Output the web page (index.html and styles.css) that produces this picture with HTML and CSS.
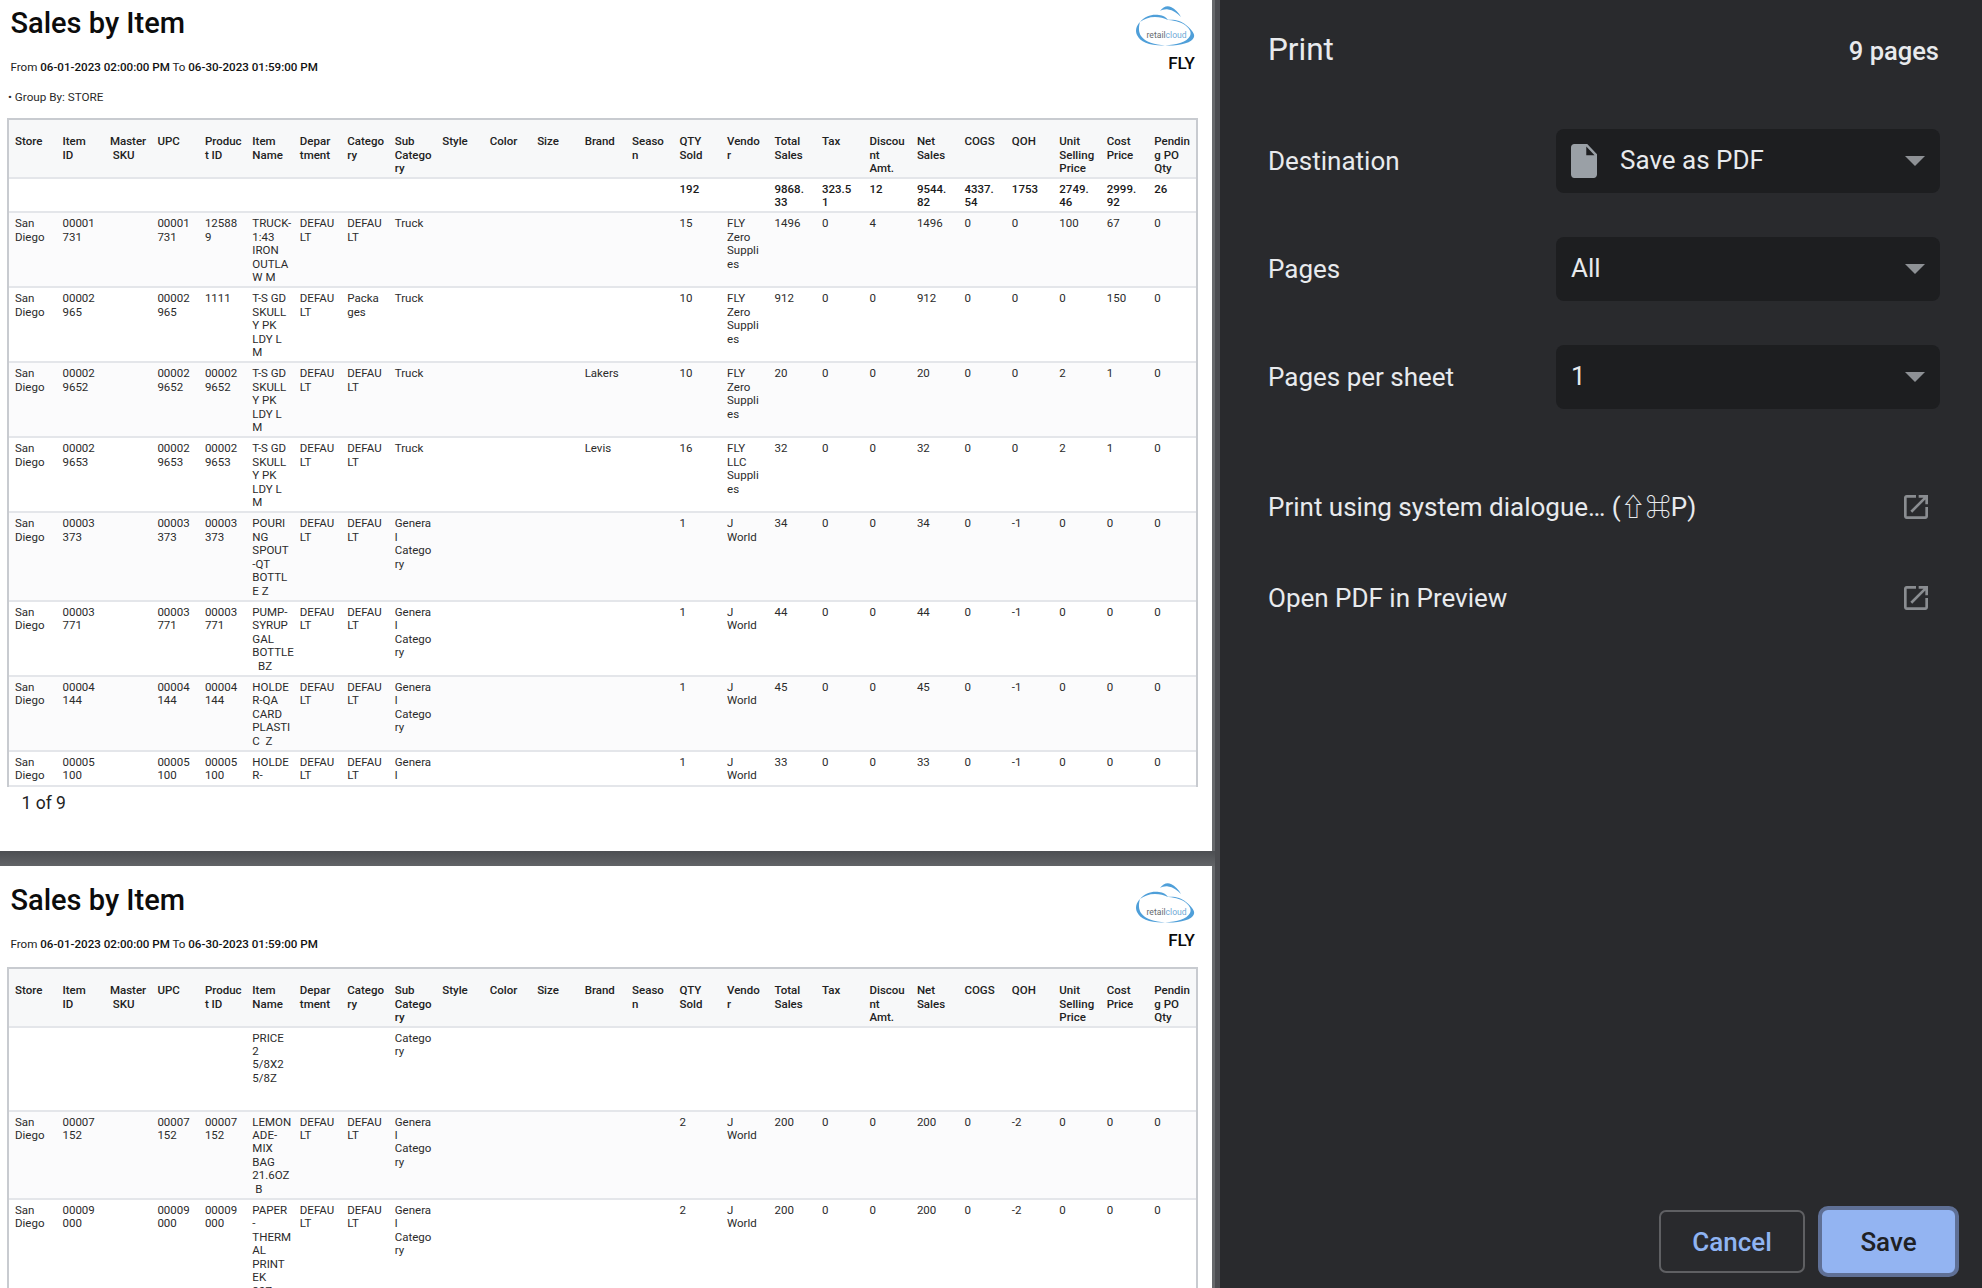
FILE: index.html
```html
<!DOCTYPE html>
<html lang="en">
<head>
<meta charset="utf-8">
<title>Print - Sales by Item</title>
<link rel="stylesheet" href="styles.css">
</head>
<body>
<div class="app">
<main class="preview">
  <section class="page page-first">
    <header class="report-head">
      <div class="report-titles">
        <h1 class="title">Sales by Item</h1>
        <p class="range">From <b>06-01-2023 02:00:00 PM</b> To <b>06-30-2023 01:59:00 PM</b></p>
      </div>
      <div class="brand">
        <svg class="logo" width="60" height="40" viewBox="0 0 60 40">
          <path class="logo-arc" d="M25 5C28 1 32 -1 36 1C40 3 44 7 46 11C42 7 38 4 33 3.500C30 3 27 4 25 5Z"/>
          <path class="logo-arc" d="M5 16C10 10 17 8 24 9C28 9.500 31 11 33 14C29 12 25 11 20 11C14 11 9 13 5 16Z"/>
          <path class="logo-arc" d="M5 16C1 20 0 25 2 29C5 36 15 40 30 39.500C20 38.500 10 36 6 30C3.500 26 3.500 21 5 16Z"/>
          <path class="logo-arc" d="M31 14C38 13 46 14 51 19C57 24 60 28 59 31C57 37 45 40 30 39.500C42 38.500 52 36 55 30C57 26 54 22 50 19C45 15.500 38 14 31 14Z"/>
        </svg>
        <span class="logo-text">retail<i>cloud</i></span>
        <span class="fly">FLY</span>
      </div>
    </header>
    <p class="group">• Group By: STORE</p>
    <table class="report">
      <thead>
        <tr><th>Store</th><th>Item<br>ID</th><th>Master<br>&nbsp;SKU</th><th>UPC</th><th>Produc<br>t ID</th><th>Item<br>Name</th><th>Depar<br>tment</th><th>Catego<br>ry</th><th>Sub<br>Catego<br>ry</th><th>Style</th><th>Color</th><th>Size</th><th>Brand</th><th>Seaso<br>n</th><th>QTY<br>Sold</th><th>Vendo<br>r</th><th>Total<br>Sales</th><th>Tax</th><th>Discou<br>nt<br>Amt.</th><th>Net<br>Sales</th><th>COGS</th><th>QOH</th><th>Unit<br>Selling<br>Price</th><th>Cost<br>Price</th><th>Pendin<br>g PO<br>Qty</th></tr>
      </thead>
      <tbody>
        <tr class="total"><td colspan="14"></td><td>192</td><td></td><td>9868.<br>33</td><td>323.5<br>1</td><td>12</td><td>9544.<br>82</td><td>4337.<br>54</td><td>1753</td><td>2749.<br>46</td><td>2999.<br>92</td><td>26</td></tr>
        <tr class="shade"><td>San<br>Diego</td><td>00001<br>731</td><td></td><td>00001<br>731</td><td>12588<br>9</td><td>TRUCK-<br>1:43<br>IRON<br>OUTLA<br>W M</td><td>DEFAU<br>LT</td><td>DEFAU<br>LT</td><td>Truck</td><td colspan="3"></td><td></td><td></td><td>15</td><td>FLY<br>Zero<br>Suppli<br>es</td><td>1496</td><td>0</td><td>4</td><td>1496</td><td>0</td><td>0</td><td>100</td><td>67</td><td>0</td></tr>
        <tr><td>San<br>Diego</td><td>00002<br>965</td><td></td><td>00002<br>965</td><td>1111</td><td>T-S GD<br>SKULL<br>Y PK<br>LDY L<br>M</td><td>DEFAU<br>LT</td><td>Packa<br>ges</td><td>Truck</td><td colspan="3"></td><td></td><td></td><td>10</td><td>FLY<br>Zero<br>Suppli<br>es</td><td>912</td><td>0</td><td>0</td><td>912</td><td>0</td><td>0</td><td>0</td><td>150</td><td>0</td></tr>
        <tr class="shade"><td>San<br>Diego</td><td>00002<br>9652</td><td></td><td>00002<br>9652</td><td>00002<br>9652</td><td>T-S GD<br>SKULL<br>Y PK<br>LDY L<br>M</td><td>DEFAU<br>LT</td><td>DEFAU<br>LT</td><td>Truck</td><td colspan="3"></td><td>Lakers</td><td></td><td>10</td><td>FLY<br>Zero<br>Suppli<br>es</td><td>20</td><td>0</td><td>0</td><td>20</td><td>0</td><td>0</td><td>2</td><td>1</td><td>0</td></tr>
        <tr><td>San<br>Diego</td><td>00002<br>9653</td><td></td><td>00002<br>9653</td><td>00002<br>9653</td><td>T-S GD<br>SKULL<br>Y PK<br>LDY L<br>M</td><td>DEFAU<br>LT</td><td>DEFAU<br>LT</td><td>Truck</td><td colspan="3"></td><td>Levis</td><td></td><td>16</td><td>FLY<br>LLC<br>Suppli<br>es</td><td>32</td><td>0</td><td>0</td><td>32</td><td>0</td><td>0</td><td>2</td><td>1</td><td>0</td></tr>
        <tr class="shade"><td>San<br>Diego</td><td>00003<br>373</td><td></td><td>00003<br>373</td><td>00003<br>373</td><td>POURI<br>NG<br>SPOUT<br>-QT<br>BOTTL<br>E Z</td><td>DEFAU<br>LT</td><td>DEFAU<br>LT</td><td>Genera<br>l<br>Catego<br>ry</td><td colspan="3"></td><td></td><td></td><td>1</td><td>J<br>World</td><td>34</td><td>0</td><td>0</td><td>34</td><td>0</td><td>-1</td><td>0</td><td>0</td><td>0</td></tr>
        <tr><td>San<br>Diego</td><td>00003<br>771</td><td></td><td>00003<br>771</td><td>00003<br>771</td><td>PUMP-<br>SYRUP<br>GAL<br>BOTTLE<br>&nbsp;&nbsp;BZ</td><td>DEFAU<br>LT</td><td>DEFAU<br>LT</td><td>Genera<br>l<br>Catego<br>ry</td><td colspan="3"></td><td></td><td></td><td>1</td><td>J<br>World</td><td>44</td><td>0</td><td>0</td><td>44</td><td>0</td><td>-1</td><td>0</td><td>0</td><td>0</td></tr>
        <tr class="shade"><td>San<br>Diego</td><td>00004<br>144</td><td></td><td>00004<br>144</td><td>00004<br>144</td><td>HOLDE<br>R-QA<br>CARD<br>PLASTI<br>C&nbsp;&nbsp;Z</td><td>DEFAU<br>LT</td><td>DEFAU<br>LT</td><td>Genera<br>l<br>Catego<br>ry</td><td colspan="3"></td><td></td><td></td><td>1</td><td>J<br>World</td><td>45</td><td>0</td><td>0</td><td>45</td><td>0</td><td>-1</td><td>0</td><td>0</td><td>0</td></tr>
        <tr><td>San<br>Diego</td><td>00005<br>100</td><td></td><td>00005<br>100</td><td>00005<br>100</td><td>HOLDE<br>R-</td><td>DEFAU<br>LT</td><td>DEFAU<br>LT</td><td>Genera<br>l</td><td colspan="3"></td><td></td><td></td><td>1</td><td>J<br>World</td><td>33</td><td>0</td><td>0</td><td>33</td><td>0</td><td>-1</td><td>0</td><td>0</td><td>0</td></tr>
      </tbody>
    </table>
    <p class="page-count">1 of 9</p>
  </section>

  <section class="page page-next">
    <header class="report-head">
      <div class="report-titles">
        <h1 class="title">Sales by Item</h1>
        <p class="range">From <b>06-01-2023 02:00:00 PM</b> To <b>06-30-2023 01:59:00 PM</b></p>
      </div>
      <div class="brand">
        <svg class="logo" width="60" height="40" viewBox="0 0 60 40">
          <path class="logo-arc" d="M25 5C28 1 32 -1 36 1C40 3 44 7 46 11C42 7 38 4 33 3.500C30 3 27 4 25 5Z"/>
          <path class="logo-arc" d="M5 16C10 10 17 8 24 9C28 9.500 31 11 33 14C29 12 25 11 20 11C14 11 9 13 5 16Z"/>
          <path class="logo-arc" d="M5 16C1 20 0 25 2 29C5 36 15 40 30 39.500C20 38.500 10 36 6 30C3.500 26 3.500 21 5 16Z"/>
          <path class="logo-arc" d="M31 14C38 13 46 14 51 19C57 24 60 28 59 31C57 37 45 40 30 39.500C42 38.500 52 36 55 30C57 26 54 22 50 19C45 15.500 38 14 31 14Z"/>
        </svg>
        <span class="logo-text">retail<i>cloud</i></span>
        <span class="fly">FLY</span>
      </div>
    </header>
    <table class="report">
      <thead>
        <tr><th>Store</th><th>Item<br>ID</th><th>Master<br>&nbsp;SKU</th><th>UPC</th><th>Produc<br>t ID</th><th>Item<br>Name</th><th>Depar<br>tment</th><th>Catego<br>ry</th><th>Sub<br>Catego<br>ry</th><th>Style</th><th>Color</th><th>Size</th><th>Brand</th><th>Seaso<br>n</th><th>QTY<br>Sold</th><th>Vendo<br>r</th><th>Total<br>Sales</th><th>Tax</th><th>Discou<br>nt<br>Amt.</th><th>Net<br>Sales</th><th>COGS</th><th>QOH</th><th>Unit<br>Selling<br>Price</th><th>Cost<br>Price</th><th>Pendin<br>g PO<br>Qty</th></tr>
      </thead>
      <tbody>
        <tr class="carry"><td colspan="5"></td><td>PRICE<br>2<br>5/8X2<br>5/8Z</td><td colspan="2"></td><td>Catego<br>ry</td><td colspan="16"></td></tr>
        <tr class="shade"><td>San<br>Diego</td><td>00007<br>152</td><td></td><td>00007<br>152</td><td>00007<br>152</td><td>LEMON<br>ADE-<br>MIX<br>BAG<br>21.6OZ<br>&nbsp;B</td><td>DEFAU<br>LT</td><td>DEFAU<br>LT</td><td>Genera<br>l<br>Catego<br>ry</td><td colspan="3"></td><td></td><td></td><td>2</td><td>J<br>World</td><td>200</td><td>0</td><td>0</td><td>200</td><td>0</td><td>-2</td><td>0</td><td>0</td><td>0</td></tr>
        <tr><td>San<br>Diego</td><td>00009<br>000</td><td></td><td>00009<br>000</td><td>00009<br>000</td><td>PAPER<br>-<br>THERM<br>AL<br>PRINT<br>EK<br>80Z</td><td>DEFAU<br>LT</td><td>DEFAU<br>LT</td><td>Genera<br>l<br>Catego<br>ry</td><td colspan="3"></td><td></td><td></td><td>2</td><td>J<br>World</td><td>200</td><td>0</td><td>0</td><td>200</td><td>0</td><td>-2</td><td>0</td><td>0</td><td>0</td></tr>
      </tbody>
    </table>
  </section>
</main>

<aside class="panel">
  <header class="panel-head">
    <h2 class="panel-title">Print</h2>
    <span class="sheet-count">9 pages</span>
  </header>
  <div class="settings">
    <label class="setting-label">Destination</label>
    <div class="select">
      <svg class="doc-icon" width="26" height="34" viewBox="4 2 16 20" preserveAspectRatio="none"><path d="M14 2H6c-1.100 0-2 .9-2 2v16c0 1.100.9 2 2 2h12c1.100 0 2-.9 2-2V8l-6-6zm-.6 6.600V3.500l5.100 5.100h-5.100z"/></svg>
      <span class="select-value">Save as PDF</span>
      <span class="caret"></span>
    </div>
    <label class="setting-label">Pages</label>
    <div class="select"><span class="select-value">All</span><span class="caret"></span></div>
    <label class="setting-label">Pages per sheet</label>
    <div class="select"><span class="select-value">1</span><span class="caret"></span></div>
  </div>
  <nav class="links">
    <a class="link"><span>Print using system dialogue… (<span class="keys">⇧⌘</span>P)</span>
      <svg class="ext-icon" width="24" height="24" viewBox="3 3 18 18"><path d="M19 19H5V5h7V3H5c-1.110 0-2 .9-2 2v14c0 1.100.89 2 2 2h14c1.100 0 2-.9 2-2v-7h-2v7zM14 3v2h3.590l-9.830 9.830 1.410 1.410L19 6.410V10h2V3h-7z"/></svg>
    </a>
    <a class="link"><span>Open PDF in Preview</span>
      <svg class="ext-icon" width="24" height="24" viewBox="3 3 18 18"><path d="M19 19H5V5h7V3H5c-1.110 0-2 .9-2 2v14c0 1.100.89 2 2 2h14c1.100 0 2-.9 2-2v-7h-2v7zM14 3v2h3.590l-9.830 9.830 1.410 1.410L19 6.410V10h2V3h-7z"/></svg>
    </a>
  </nav>
  <footer class="actions">
    <button class="btn btn-cancel">Cancel</button>
    <button class="btn btn-save">Save</button>
  </footer>
</aside>
</div>
</body>
</html>
```
FILE: styles.css
```css
* { box-sizing: border-box; }
html, body { margin: 0; height: 100%; overflow: hidden; background: #292a2d; }
body { font-family: Roboto, "Noto Sans", sans-serif; }

.app { display: flex; width: 1982px; height: 1288px; overflow: hidden; }

/* preview column */
.preview {
  width: 1220px;
  flex: none;
  height: 1288px;
  overflow: hidden;
  background: linear-gradient(90deg, #66686b 1215px, #4b4c50 1215px);
}
.page {
  position: relative;
  width: 1212px;
  background: #fff;
  padding: 0 7px;
  color: #1f1f1f;
}
.page-first { height: 851px; margin-bottom: 15px; }
.page-first::after {
  content: "";
  position: absolute;
  top: 100%;
  left: 0;
  width: 1215px;
  height: 15px;
  background: linear-gradient(180deg, #4c4e52, #626467);
}
.page-next { height: 422px; padding-top: 11px; overflow: hidden; }

.report-head { display: flex; justify-content: space-between; align-items: flex-start; padding: 0 10px 0 3.500px; }
.title { margin: 0; padding-top: 6px; font-size: 29px; line-height: 34px; font-weight: 500; color: #0c0c0c; }
.range { margin: 20.500px 0 15.500px; font-size: 11.600px; line-height: 13.400px; color: #222; }
.range b { font-weight: 500; color: #111; }

.brand { position: relative; display: flex; flex-direction: column; align-items: flex-end; padding-top: 5.500px; width: 60px; }
.logo { display: block; flex: none; }
.logo-arc { fill: #4f9fd9; }
.logo-text {
  position: absolute;
  left: 11.500px;
  top: 29px;
  font-size: 8.600px;
  line-height: 12px;
  color: #666a6e;
  white-space: nowrap;
}
.logo-text i { font-style: normal; color: #6fa9d6; }
.fly { margin-top: 7px; font-size: 17px; line-height: 20px; font-weight: 500; color: #0a0a0a; }

.group { margin: 1.500px 0 14px 1px; font-size: 11.700px; line-height: 13.400px; color: #2a2a2a; }

/* report table */
.report {
  table-layout: fixed;
  width: 1191px;
  margin-top: 1px;
  border-collapse: separate;
  border-spacing: 0;
  border-top: 2px solid #c8cbd0;
  border-left: 2px solid #c8cbd0;
  border-right: 2px solid #c8cbd0;
  font-size: 11.500px;
  line-height: 13.400px;
  white-space: nowrap;
}
.report th, .report td {
  padding: 4px 0 2px 6px;
  text-align: left;
  vertical-align: top;
  border-bottom: 2px solid #e4e6ea;
  color: #2b2b2b;
  font-weight: 400;
}
.report th { padding: 15px 0 1px 6px; background: #f7f8f9; font-weight: 500; color: #222; }
.report .total td { font-weight: 500; color: #1a1a1a; background: #fff; }
.report .shade td { background: #fbfbfc; }
.report .carry td { padding-bottom: 24.400px; }

.page-count { margin: 6px 0 0 14.500px; font-size: 17.500px; line-height: 20px; color: #222; }

/* print settings */
.panel {
  width: 762px;
  flex: none;
  height: 1288px;
  display: flex;
  flex-direction: column;
  padding: 25px 43px 11px 48px;
  background: #292a2d;
  color: #e8eaed;
}
.panel-head { display: flex; justify-content: space-between; align-items: center; height: 50px; margin-bottom: 54px; }
.panel-title { margin: 0; font-size: 31.500px; font-weight: 400; line-height: 50px; }
.sheet-count { font-size: 25.500px; font-weight: 500; color: #e8eaed; padding-top: 2px; }

.settings { display: grid; grid-template-columns: 288px 383.500px; grid-auto-rows: 64px; row-gap: 44px; align-items: center; }
.setting-label { font-size: 26px; }
.select {
  position: relative;
  display: flex;
  align-items: center;
  height: 64px;
  padding: 0 15px 0 15px;
  border-radius: 8px;
  background: #1d1e20;
  font-size: 26px;
  color: #e8eaed;
}
.doc-icon { flex: none; margin-right: 23px; fill: #9aa0a6; }
.select-value { flex: 1; margin-top: -2px; }
.caret {
  flex: none;
  width: 0;
  height: 0;
  border-left: 10px solid transparent;
  border-right: 10px solid transparent;
  border-top: 10px solid #8e9195;
}

.links { display: flex; flex-direction: column; margin-top: 52.500px; }
.link {
  display: flex;
  align-items: center;
  justify-content: space-between;
  height: 91px;
  padding-right: 11px;
  font-size: 26px;
  line-height: 34px;
  color: #e8eaed;
}
.keys { font-family: "Noto Sans CJK JP", "DejaVu Sans", sans-serif; font-size: 25px; line-height: 1; }
.ext-icon { flex: none; fill: #8a8d91; }

.actions { display: flex; justify-content: flex-end; align-items: center; gap: 13px; margin-top: auto; margin-right: -20px; }
.btn { font-family: Roboto, sans-serif; font-size: 26px; font-weight: 500; cursor: pointer; }
.btn-cancel {
  width: 146px;
  height: 63px;
  border: 2px solid #5f6063;
  border-radius: 7px;
  background: transparent;
  color: #8fb4f2;
}
.btn-save {
  width: 141px;
  height: 71px;
  border: 4px solid #5f7096;
  border-radius: 10px;
  background: #93b4f2;
  color: #202124;
}
```
